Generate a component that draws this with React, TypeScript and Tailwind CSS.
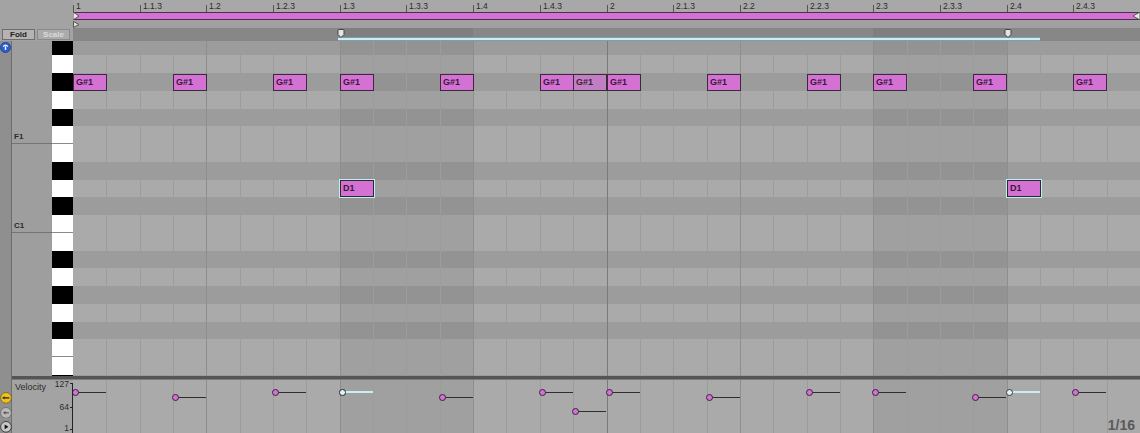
import React from "react";

const W16 = 1067 / 32;
const ROW = 17.75;

const rows = [
  { n: "A#1", b: true },
  { n: "A1", b: false },
  { n: "G#1", b: true },
  { n: "G1", b: false },
  { n: "F#1", b: true },
  { n: "F1", b: false },
  { n: "E1", b: false },
  { n: "D#1", b: true },
  { n: "D1", b: false },
  { n: "C#1", b: true },
  { n: "C1", b: false },
  { n: "B0", b: false },
  { n: "A#0", b: true },
  { n: "A0", b: false },
  { n: "G#0", b: true },
  { n: "G0", b: false },
  { n: "F#0", b: true },
  { n: "F0", b: false },
  { n: "E0", b: false },
  { n: "D#0", b: true },
];

// start in 16ths, row index, velocity y inside lane
const notes = [
  { s: 0, r: 2, v: 12 },
  { s: 3, r: 2, v: 17 },
  { s: 6, r: 2, v: 12 },
  { s: 8, r: 2, v: 12 },
  { s: 11, r: 2, v: 17 },
  { s: 14, r: 2, v: 12 },
  { s: 15, r: 2, v: 31, dim: true },
  { s: 16, r: 2, v: 12 },
  { s: 19, r: 2, v: 17 },
  { s: 22, r: 2, v: 12 },
  { s: 24, r: 2, v: 12 },
  { s: 27, r: 2, v: 17 },
  { s: 30, r: 2, v: 12 },
  { s: 8, r: 8, v: 12, sel: true },
  { s: 28, r: 8, v: 12, sel: true },
];

const labels = [
  "1", "1.1.3", "1.2", "1.2.3", "1.3", "1.3.3", "1.4", "1.4.3",
  "2", "2.1.3", "2.2", "2.2.3", "2.3", "2.3.3", "2.4", "2.4.3",
];

function Shading() {
  return (
    <>
      <div
        className="absolute top-0 bottom-0 bg-black/[0.055]"
        style={{ left: 8 * W16, width: 4 * W16 }}
      />
      <div
        className="absolute top-0 bottom-0 bg-black/[0.055]"
        style={{ left: 24 * W16, width: 4 * W16 }}
      />
    </>
  );
}

function GridLines() {
  return (
    <>
      {Array.from({ length: 32 }).map((_, i) => {
        if (i === 0) return null;
        const cls =
          i % 16 === 0
            ? "bg-[#7a7a7a]"
            : i % 4 === 0
            ? "bg-[#8e8e8e]"
            : "bg-[#9c9c9c]";
        return (
          <div
            key={i}
            className={"absolute top-0 bottom-0 w-px " + cls}
            style={{ left: Math.round(i * W16) }}
          />
        );
      })}
    </>
  );
}

function Note({ s, r, dim, sel }: { s: number; r: number; dim?: boolean; sel?: boolean }) {
  return (
    <div
      className={
        "absolute flex items-center pl-[2px] text-[9px] font-bold leading-none border " +
        (dim ? "bg-[#c27ec2] text-[#3d1f3d] " : "bg-[#d472d4] text-[#3a163a] ") +
        (sel ? "border-[#2a2a2a] outline outline-1 outline-[#bfeef6]" : "border-[#3b2a3b]")
      }
      style={{
        left: Math.round(s * W16),
        top: -3.5 + r * ROW + 0.5,
        width: Math.round(W16) + 1,
        height: 17,
      }}
    >
      {rows[r].n}
    </div>
  );
}

export default function App() {
  return (
    <div className="w-[1140px] h-[433px] overflow-hidden bg-[#a3a3a3] font-['Liberation_Sans',Arial,sans-serif] flex flex-col select-none">
      {/* header */}
      <div className="flex h-[41px]">
        <div className="w-[73px] flex flex-col bg-[#a3a3a3]">
          <div className="h-[28px]" />
          <div className="h-[13px] flex items-start gap-[2px] pl-[2px] pt-[1px]">
            <div className="w-[33px] h-[11px] border border-[#6e6e6e] bg-[#b4b4b4] text-[8px] font-bold text-[#222] leading-[9px] text-center">
              Fold
            </div>
            <div className="w-[33px] h-[11px] border border-[#8a8a8a] bg-[#ababab] text-[8px] font-bold text-[#dcdcdc] leading-[9px] text-center">
              Scale
            </div>
          </div>
        </div>
        <div className="flex-1 flex flex-col">
          {/* ruler */}
          <div className="relative h-[12px] bg-[#a8a8a8]">
            {labels.map((l, i) => (
              <div
                key={l}
                className="absolute top-0 h-[12px] flex items-end"
                style={{ left: Math.round(i * 2 * W16) }}
              >
                <div className="w-px h-[7px] bg-[#555]" />
                <span className="ml-[2px] text-[8.5px] leading-[11px] text-[#2a2a2a]">{l}</span>
              </div>
            ))}
          </div>
          {/* loop brace */}
          <div className="relative h-[8px] bg-[#d472d4] border-y border-[#4a304a]">
            <svg className="absolute left-0 -top-px" width="7" height="8" viewBox="0 0 7 8">
              <polygon points="0,0 6,4 0,8" fill="#e8e8e8" stroke="#555" strokeWidth="1" />
            </svg>
            <svg className="absolute right-0 -top-px" width="8" height="8" viewBox="0 0 8 8">
              <polygon points="8,0 1,4 8,8" fill="#e8e8e8" stroke="#555" strokeWidth="1" />
            </svg>
          </div>
          <div className="relative h-[8px] bg-[#a0a0a0]">
            <svg className="absolute left-0 top-[1px]" width="7" height="7" viewBox="0 0 7 7">
              <polygon points="0.5,0.5 6,3.5 0.5,6.5" fill="#dedede" stroke="#555" strokeWidth="1" />
            </svg>
          </div>
          {/* marker strip */}
          <div className="relative h-[13px] bg-[#878787] overflow-hidden">
            <Shading />
            <div
              className="absolute top-[9px] h-[4px] bg-[#c9eff5] border-y border-[#7f9ea5] rounded-r-[1px]"
              style={{ left: Math.round(8 * W16) - 2, width: Math.round(21 * W16) + 2 }}
            />
            {[8, 28].map((s) => (
              <svg
                key={s}
                className="absolute top-[1px]"
                style={{ left: Math.round(s * W16) - 3 }}
                width="8"
                height="9"
                viewBox="0 0 8 9"
              >
                <path d="M1 1.5 Q1 0.5 2 0.5 L6 0.5 Q7 0.5 7 1.5 L7 5.5 L4 8.5 L1 5.5 Z" fill="#e4e4e4" stroke="#444" strokeWidth="1" />
              </svg>
            ))}
          </div>
        </div>
      </div>

      {/* notes area */}
      <div className="flex h-[335px]">
        <div className="w-[12px] bg-[#8f8f8f] border-r border-[#6d6d6d] flex flex-col items-center pt-[1px]">
          <svg width="11" height="11" viewBox="0 0 11 11">
            <circle cx="5.5" cy="5.5" r="5" fill="#2a5fd6" stroke="#1c3b80" strokeWidth="0.8" />
            <path d="M3.2 4.5 Q5.5 1.8 7.8 4.5" stroke="white" strokeWidth="1.2" fill="none" />
            <rect x="4.8" y="4.3" width="1.4" height="3.6" fill="white" />
          </svg>
        </div>
        <div className="w-[40px] bg-[#9e9e9e] relative overflow-hidden">
          {[5, 10].map((r) => (
            <div
              key={r}
              className="absolute left-0 right-0 border-b border-[#747474] text-[8px] font-bold text-[#2a2a2a] pl-[2px] flex items-end pb-[2px] leading-none"
              style={{ top: -3.5 + r * ROW - 2, height: ROW + 2 }}
            >
              {rows[r].n}
            </div>
          ))}
        </div>
        <div className="w-[21px] overflow-hidden">
          <div className="-mt-[3.5px] flex flex-col">
            {rows.map((k, i) => {
              const next = rows[i + 1];
              const sep = !k.b && next && !next.b;
              return (
                <div
                  key={k.n}
                  className={
                    "h-[17.75px] " +
                    (k.b ? "bg-black" : "bg-white") +
                    (sep ? " border-b border-[#8a8a8a]" : "")
                  }
                />
              );
            })}
          </div>
        </div>
        <div className="relative flex-1 overflow-hidden">
          <div className="-mt-[3.5px] flex flex-col">
            {rows.map((k) => (
              <div key={k.n} className={"h-[17.75px] " + (k.b ? "bg-[#9c9c9c]" : "bg-[#aaaaaa]")} />
            ))}
          </div>
          <Shading />
          <GridLines />
          {notes.map((n, i) => (
            <Note key={i} s={n.s} r={n.r} dim={n.dim} sel={n.sel} />
          ))}
        </div>
      </div>

      {/* splitter */}
      <div className="flex h-[4px]">
        <div className="w-[12px] bg-[#8f8f8f] border-r border-[#6d6d6d]" />
        <div className="flex-1 bg-[#555555] border-b border-[#7a7a7a]" />
      </div>

      {/* velocity lane */}
      <div className="flex h-[53px]">
        <div className="w-[12px] bg-[#8f8f8f] border-r border-[#6d6d6d] flex flex-col items-center gap-[3px] pt-[12px]">
          <svg width="12" height="12" viewBox="0 0 12 12">
            <circle cx="6" cy="6" r="5.5" fill="#f2c21b" stroke="#7a6310" strokeWidth="0.8" />
            <rect x="2.5" y="5.3" width="7" height="1.5" fill="#333" />
            <path d="M2.5 6 L4.5 4.2 L4.5 7.8 Z" fill="#333" />
          </svg>
          <svg width="12" height="12" viewBox="0 0 12 12">
            <circle cx="6" cy="6" r="5.5" fill="#b9b9b9" stroke="#6a6a6a" strokeWidth="0.8" />
            <path d="M3 6 L5.5 4.2 L5.5 7.8 Z" fill="#444" />
            <rect x="5.4" y="5.5" width="3.5" height="1" fill="#444" />
          </svg>
          <svg width="12" height="12" viewBox="0 0 12 12">
            <circle cx="6" cy="6" r="5.5" fill="#c8c8c8" stroke="#333" strokeWidth="0.9" />
            <path d="M4.6 3.6 L8.6 6 L4.6 8.4 Z" fill="#111" />
          </svg>
        </div>
        <div className="w-[61px] bg-[#a3a3a3] flex relative">
          <div className="pl-[3px] pt-[3px] text-[9px] text-[#2c2c2c] leading-none w-[40px]">Velocity</div>
          <div className="flex-1 relative text-[8.5px] text-[#2c2c2c] leading-none">
            <span className="absolute right-[4px] top-[0px]">127</span>
            <span className="absolute right-[4px] top-[23px]">64</span>
            <span className="absolute right-[4px] top-[44px]">1</span>
          </div>
          <div className="absolute right-0 top-[3px] bottom-0 w-px bg-[#222]" />
          <div className="absolute right-0 top-[3px] w-[3px] h-px bg-[#222]" />
          <div className="absolute right-0 top-[27px] w-[3px] h-px bg-[#222]" />
          <div className="absolute right-0 top-[49px] w-[3px] h-px bg-[#222]" />
        </div>
        <div className="relative flex-1 bg-[#aaaaaa] overflow-hidden">
          <Shading />
          <GridLines />
          {notes.map((n, i) => {
            const x = Math.round(n.s * W16);
            return (
              <div key={i} className="absolute" style={{ left: x, top: n.v - 3 }}>
                <div
                  className={
                    "absolute left-[2px] " + (n.sel ? "top-[2px] h-[2px] bg-[#c9eff5]" : "top-[3px] h-px bg-[#2e2e2e]")
                  }
                  style={{ width: Math.round(W16) - 2 }}
                />
                <div
                  className={
                    "absolute top-0 left-[-1px] w-[7px] h-[7px] rounded-full border " +
                    (n.sel ? "bg-[#d9f6fa] border-[#3a3a3a]" : "bg-[#d472d4] border-[#3a1f3a]")
                  }
                />
              </div>
            );
          })}
          <div className="absolute right-[5px] bottom-[1px] text-[14px] font-bold text-[#5a5a5a] leading-none">1/16</div>
        </div>
      </div>
    </div>
  );
}
